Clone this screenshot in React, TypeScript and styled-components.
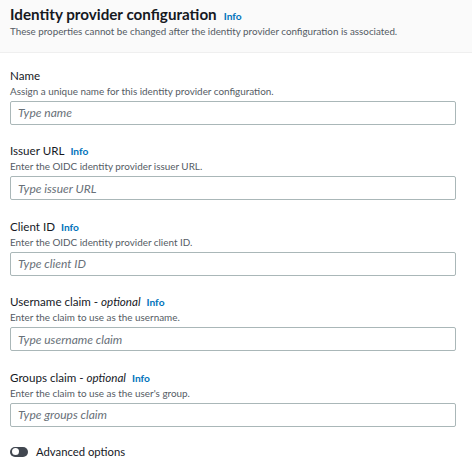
import React, { useState } from 'react';
import styled, { createGlobalStyle } from 'styled-components';

const GlobalStyle = createGlobalStyle`
  html, body {
    margin: 0;
    padding: 0;
    background: #ffffff;
  }
  body {
    font-family: Lato, "Open Sans", Arial, sans-serif;
    color: #16191f;
  }
`;

type FieldProps = {
  label: string;
  optional?: boolean;
  info?: boolean;
  description: string;
  placeholder: string;
};

const fields: FieldProps[] = [
  {
    label: 'Name',
    description: 'Assign a unique name for this identity provider configuration.',
    placeholder: 'Type name',
  },
  {
    label: 'Issuer URL',
    info: true,
    description: 'Enter the OIDC identity provider issuer URL.',
    placeholder: 'Type issuer URL',
  },
  {
    label: 'Client ID',
    info: true,
    description: 'Enter the OIDC identity provider client ID.',
    placeholder: 'Type client ID',
  },
  {
    label: 'Username claim',
    optional: true,
    info: true,
    description: 'Enter the claim to use as the username.',
    placeholder: 'Type username claim',
  },
  {
    label: 'Groups claim',
    optional: true,
    info: true,
    description: "Enter the claim to use as the user's group.",
    placeholder: 'Type groups claim',
  },
];

const Field = ({ label, optional, info, description, placeholder }: FieldProps) => (
  <FieldWrap>
    <LabelRow>
      <Label>
        {label}
        {optional && (
          <>
            {' - '}
            <Optional>optional</Optional>
          </>
        )}
      </Label>
      {info && <InfoLink>Info</InfoLink>}
    </LabelRow>
    <Description>{description}</Description>
    <Input placeholder={placeholder} />
  </FieldWrap>
);

const App = () => {
  const [advanced, setAdvanced] = useState<boolean>(false);

  return (
    <>
      <GlobalStyle />
      <Page>
        <Header>
          <TitleRow>
            <Title>Identity provider configuration</Title>
            <HeaderInfo>Info</HeaderInfo>
          </TitleRow>
          <Subtitle>
            These properties cannot be changed after the identity provider configuration is associated.
          </Subtitle>
        </Header>
        <Form>
          {fields.map((field) => (
            <Field key={field.label} {...field} />
          ))}
          <ToggleRow onClick={() => setAdvanced((prev) => !prev)}>
            <Toggle on={advanced ? 1 : 0} />
            <ToggleLabel>Advanced options</ToggleLabel>
          </ToggleRow>
        </Form>
      </Page>
    </>
  );
};

const Page = styled.div`
  width: 474px;
`;

const Header = styled.div`
  width: 472px;
  height: 53px;
  box-sizing: border-box;
  padding: 5px 10px 0;
  background: #fafafa;
  border-bottom: 1px solid #efefef;
`;

const TitleRow = styled.div`
  display: flex;
  align-items: baseline;
  gap: 7px;
`;

const Title = styled.h2`
  margin: 0;
  font-size: 15.2px;
  line-height: 19px;
  font-weight: 700;
  color: #16191f;
`;

const HeaderInfo = styled.span`
  font-size: 10.2px;
  font-weight: 700;
  color: #0073bb;
`;

const Subtitle = styled.p`
  margin: 0;
  font-size: 9.8px;
  line-height: 14px;
  color: #545b64;
`;

const Form = styled.div`
  display: flex;
  flex-direction: column;
  gap: 18.5px;
  padding: 14.5px 10px 0;
`;

const FieldWrap = styled.div`
  display: flex;
  flex-direction: column;
`;

const LabelRow = styled.div`
  display: flex;
  align-items: baseline;
  gap: 6px;
  height: 16px;
`;

const Label = styled.span`
  font-size: 11.6px;
  line-height: 16px;
  color: #16191f;
`;

const Optional = styled.i`
  font-style: italic;
`;

const InfoLink = styled.span`
  font-size: 10.2px;
  font-weight: 700;
  color: #0073bb;
`;

const Description = styled.div`
  font-size: 9.9px;
  line-height: 14px;
  color: #545b64;
  margin-bottom: 3px;
`;

const Input = styled.input`
  box-sizing: border-box;
  width: 446px;
  height: 24px;
  padding: 0 7px;
  border: 1px solid #aab7b8;
  border-radius: 2px;
  font-family: inherit;
  font-size: 12px;
  color: #16191f;
  background: #ffffff;

  &::placeholder {
    font-style: italic;
    color: #687078;
  }
`;

const ToggleRow = styled.div`
  display: flex;
  align-items: center;
  gap: 8px;
  height: 13px;
  cursor: pointer;
`;

const Toggle = styled.span<{ on: number }>`
  position: relative;
  width: 18px;
  height: 10px;
  border-radius: 5px;
  background: ${(props) => (props.on ? '#0073bb' : '#414750')};

  &::after {
    content: '';
    position: absolute;
    top: 1.5px;
    left: ${(props) => (props.on ? '9.5px' : '1.5px')};
    width: 7px;
    height: 7px;
    border-radius: 50%;
    background: #ffffff;
    transition: left 0.2s;
  }
`;

const ToggleLabel = styled.span`
  font-size: 11.3px;
  color: #16191f;
`;

export default App;
